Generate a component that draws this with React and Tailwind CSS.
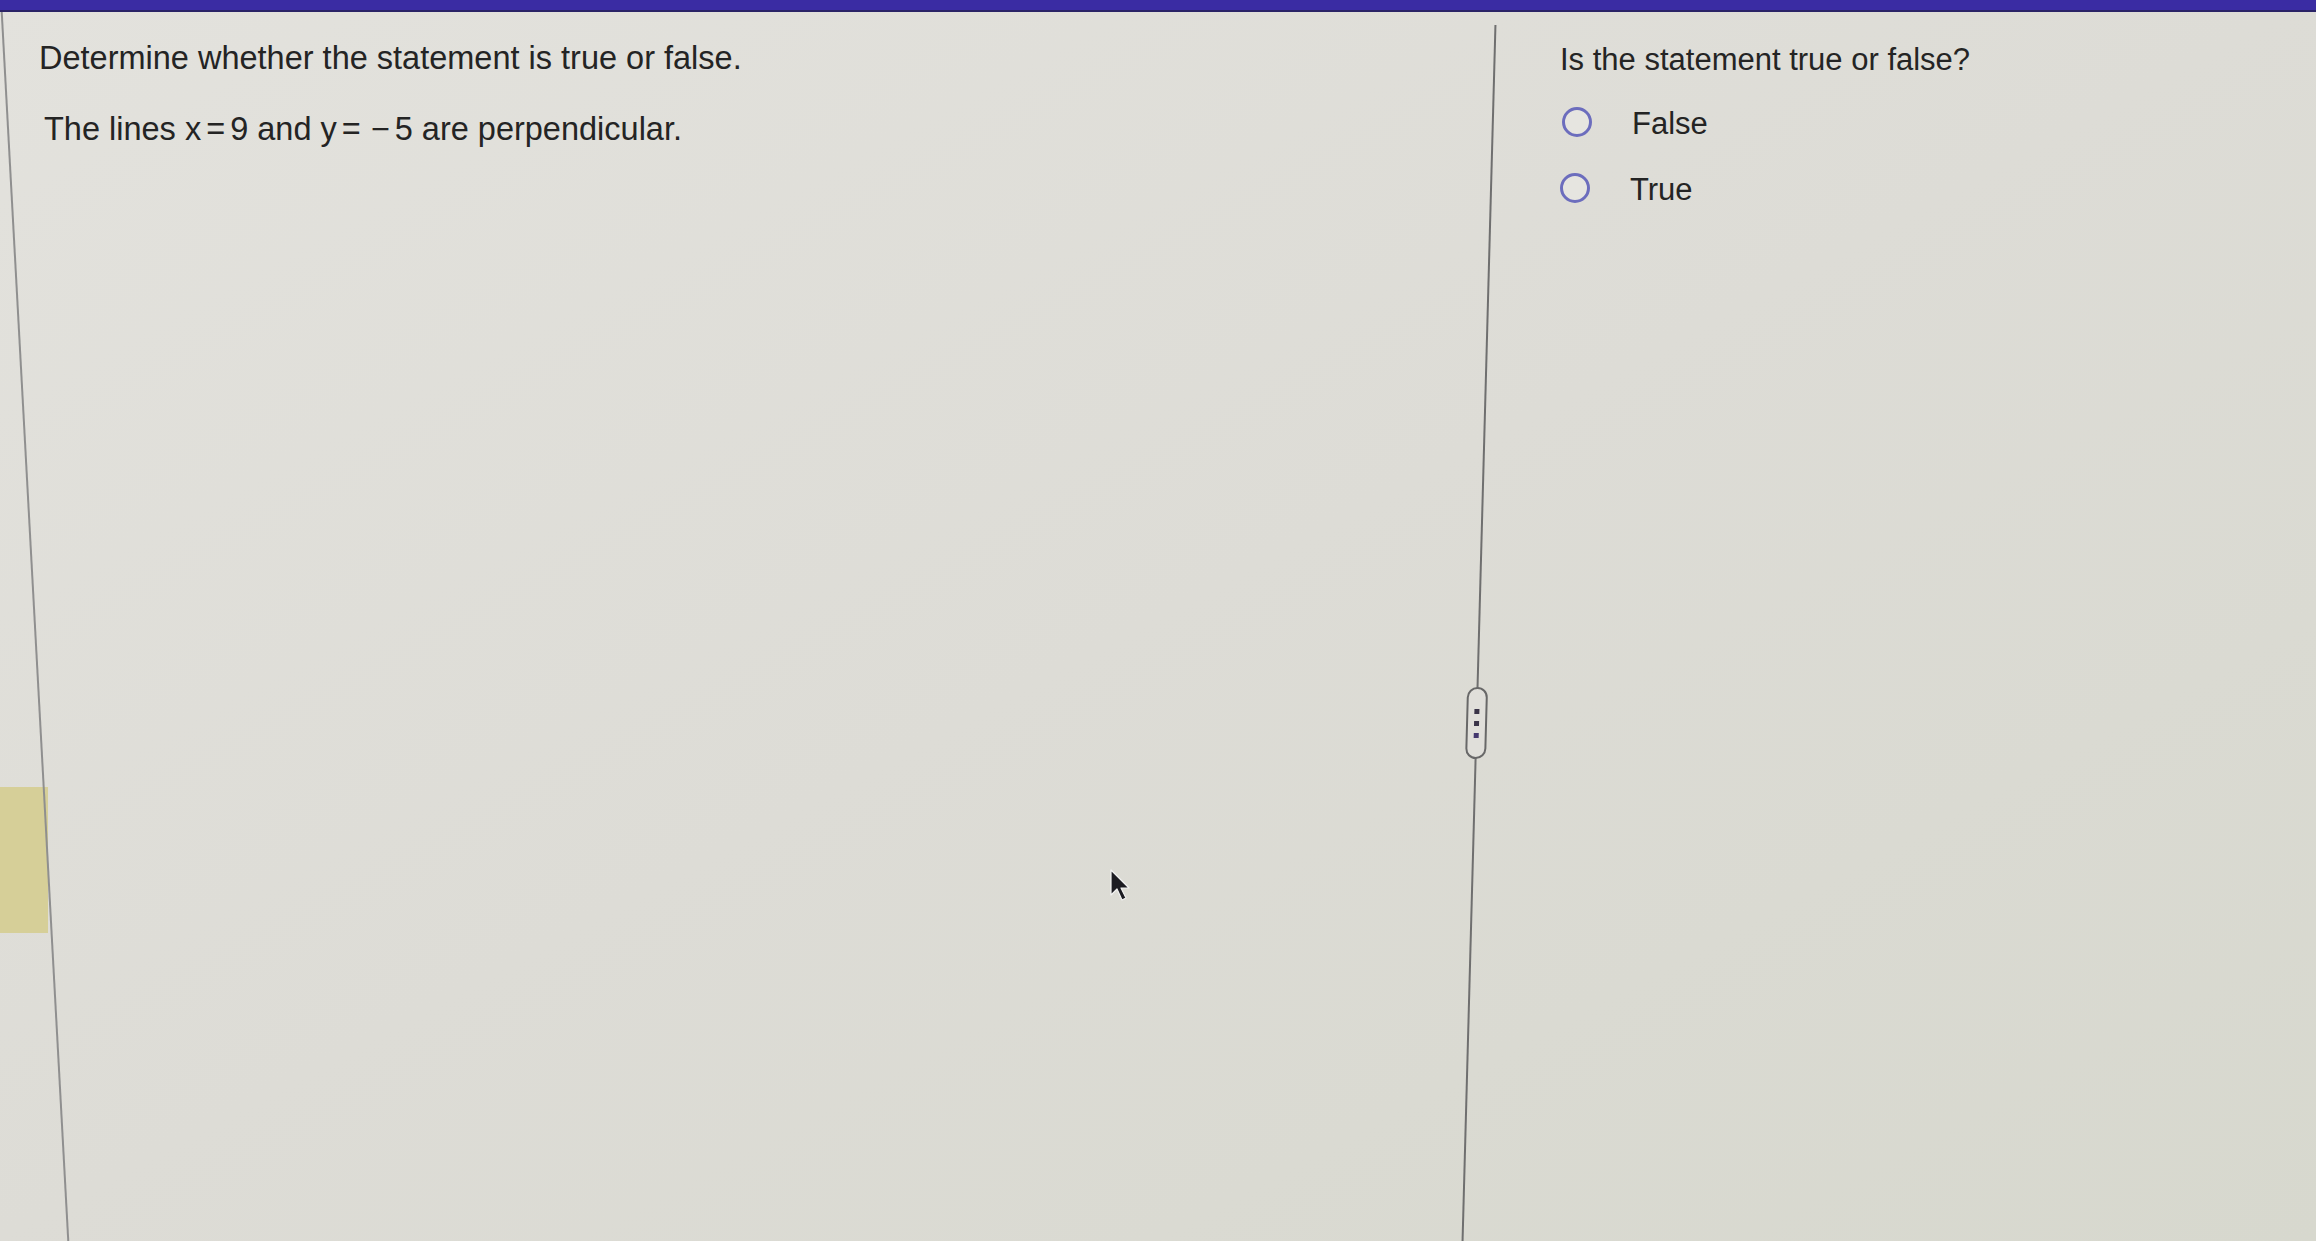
import React from 'react';

const font = { fontFamily: '"Liberation Sans", Arial, Helvetica, sans-serif' };

function Radio({ label }) {
  return (
    <label className="flex items-center h-[40px] cursor-pointer">
      <span className="w-[30px] h-[30px] rounded-full border-[3px] border-[#6c6dbd] bg-[#e6e5e0] shrink-0 -mt-[4px]" />
      <span className="ml-[40px] text-[31px] leading-[40px] text-[#242424]">{label}</span>
    </label>
  );
}

function Cursor() {
  return (
    <svg
      className="absolute left-[1108px] top-[868px]"
      width="24"
      height="36"
      viewBox="0 0 24 36"
    >
      <path
        d="M3 2 L3 27 L9 21 L14 32 L18 30 L13 20 L21 20 Z"
        fill="#1c1c22"
        stroke="#f2f2f2"
        strokeWidth="1.2"
        strokeLinejoin="round"
      />
    </svg>
  );
}

export default function App() {
  return (
    <div
      className="relative w-[2316px] h-[1241px] overflow-hidden flex flex-col bg-gradient-to-br from-[#e3e2dd] via-[#dddcd6] to-[#d7d8ce]"
      style={font}
    >
      {/* top bar */}
      <div className="h-[10px] bg-[#3a2ca3] shrink-0" />
      <div className="h-[2px] bg-[#2a2366] shrink-0" />

      <div className="flex flex-1 min-h-0">
        {/* left strip with tab */}
        <div className="w-[34px] shrink-0 flex flex-col">
          <div className="mt-[775px] h-[146px] w-[48px] bg-[#d6cf98]" />
        </div>
        <div className="w-[2px] shrink-0 bg-[#8f8f8f] skew-x-[3.1deg]" />

        {/* question panel */}
        <div className="w-[1442px] shrink-0 pl-[3px] pt-[26px] text-[#242424]">
          <p className="text-[32.5px] leading-[40px]">
            Determine whether the statement is true or false.
          </p>
          <p className="mt-[31px] ml-[5px] text-[32.5px] leading-[40px]">
            The lines x<span className="mx-[5px]">=</span>9 and y<span className="mx-[5px]">=</span>
            <span className="mx-[5px]">−</span>5 are perpendicular.
          </p>
        </div>

        {/* divider */}
        <div className="relative w-[2px] shrink-0 mt-[13px] bg-[#6f6f6f] skew-x-[-1.55deg]">
          <div className="absolute left-1/2 -translate-x-1/2 top-[662px] w-[21px] h-[72px] rounded-full border-2 border-[#686868] bg-[#e0dfda] flex flex-col items-center justify-center gap-[7px]">
            <span className="w-[5px] h-[5px] bg-[#3a3448]" />
            <span className="w-[5px] h-[5px] bg-[#3a3448]" />
            <span className="w-[5px] h-[5px] bg-[#44386e]" />
          </div>
        </div>

        {/* answer panel */}
        <div className="flex-1 pl-[80px] pt-[28px] text-[#242424]">
          <p className="text-[31px] leading-[40px]">Is the statement true or false?</p>
          <div className="mt-[24px] flex flex-col gap-[26px]">
            <div className="ml-[2px]">
              <Radio label="False" />
            </div>
            <Radio label="True" />
          </div>
        </div>
      </div>

      <Cursor />
    </div>
  );
}
